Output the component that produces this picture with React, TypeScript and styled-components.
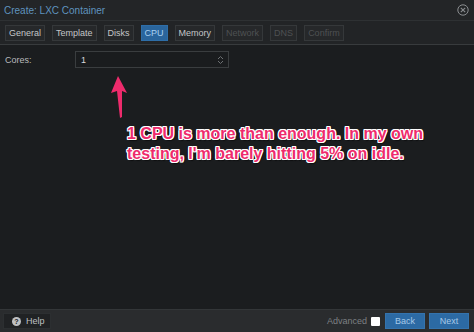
import React from "react";
import styled, { createGlobalStyle } from "styled-components";

const Global = createGlobalStyle`
  html, body { margin: 0; padding: 0; background: #1c1e20; }
  body { font-family: "Liberation Sans", Arial, sans-serif; }
  #root { width: 474px; height: 332px; }
`;

const Window = styled.div`
  position: relative;
  width: 474px;
  height: 332px;
  display: flex;
  flex-direction: column;
  background: #1c1e20;
  overflow: hidden;
`;

const TitleBar = styled.div`
  height: 20px;
  display: flex;
  align-items: center;
  justify-content: space-between;
  padding: 0 5px 0 4px;
  background: #232527;
  border-bottom: 1px solid #2e3133;
`;

const Title = styled.div`
  color: #5f93bf;
  font-size: 10px;
`;

const TabBar = styled.div`
  height: 23px;
  display: flex;
  align-items: center;
  gap: 7px;
  padding: 0 5px;
  background: #222426;
  border-bottom: 1px solid #383b3d;
`;

const Tab = styled.div<{ $active?: boolean; $disabled?: boolean }>`
  height: 14px;
  padding: 0 3px;
  display: flex;
  align-items: center;
  font-size: 9px;
  border: 1px solid ${(p) => (p.$active ? "#2e6ea8" : "#35383a")};
  background: ${(p) => (p.$active ? "#2a659c" : "#26282a")};
  color: ${(p) => (p.$active ? "#a9d0f2" : p.$disabled ? "#4e5153" : "#c4c6c8")};
`;

const Body = styled.div`
  flex: 1;
  padding: 6px 5px;
  background: #1b1d1f;
`;

const Row = styled.div`
  display: flex;
  align-items: center;
`;

const Label = styled.div`
  width: 70px;
  color: #b8babc;
  font-size: 9px;
`;

const Input = styled.div`
  width: 154px;
  height: 17px;
  display: flex;
  align-items: center;
  justify-content: space-between;
  padding: 0 4px 0 5px;
  box-sizing: border-box;
  border: 1px solid #3a3d3f;
  background: #1a1c1e;
  color: #d8dadc;
  font-size: 9px;
`;

const Footer = styled.div`
  height: 22px;
  display: flex;
  align-items: center;
  padding: 0 5px 0 3px;
  background: #2a2c2e;
  border-top: 1px solid #333638;
`;

const HelpButton = styled.div`
  width: 48px;
  height: 16px;
  box-sizing: border-box;
  display: flex;
  align-items: center;
  gap: 5px;
  padding-left: 8px;
  background: #202224;
  border: 1px solid #2c2f31;
  color: #bfc1c3;
  font-size: 9px;
`;

const Spacer = styled.div`
  flex: 1;
`;

const Advanced = styled.div`
  display: flex;
  align-items: center;
  gap: 4px;
  color: #7d8083;
  font-size: 9px;
  margin-right: 5px;
`;

const Check = styled.div`
  width: 9px;
  height: 9px;
  background: #ffffff;
  border-radius: 1px;
`;

const BlueButton = styled.div`
  width: 40px;
  height: 16px;
  box-sizing: border-box;
  display: flex;
  align-items: center;
  justify-content: center;
  background: #2c6aa4;
  border: 1px solid #3473ad;
  color: #a7c9e8;
  font-size: 9px;
  & + & {
    margin-left: 4px;
  }
`;

const Arrow = styled.svg`
  position: absolute;
  left: 108px;
  top: 75px;
`;

const Note = styled.div`
  position: absolute;
  left: 127px;
  top: 124px;
  font-family: "Liberation Sans", Arial, sans-serif;
  font-weight: bold;
  font-size: 16px;
  line-height: 20px;
  letter-spacing: 0;
  color: #ee2b6c;
  text-shadow:
    1px 0 0 #fff, -1px 0 0 #fff, 0 1px 0 #fff, 0 -1px 0 #fff,
    1px 1px 0 #fff, -1px -1px 0 #fff, 1px -1px 0 #fff, -1px 1px 0 #fff,
    1.5px 1.5px 1px rgba(0,0,0,0.5);
  white-space: nowrap;
`;

export default function App() {
  return (
    <>
      <Global />
      <Window>
        <TitleBar>
          <Title>Create: LXC Container</Title>
          <svg width="12" height="12" viewBox="0 0 12 12">
            <circle cx="6" cy="6" r="5.2" fill="none" stroke="#8a8d90" strokeWidth="1" />
            <path d="M3.8 3.8 L8.2 8.2 M8.2 3.8 L3.8 8.2" stroke="#8a8d90" strokeWidth="1.1" />
          </svg>
        </TitleBar>
        <TabBar>
          <Tab>General</Tab>
          <Tab>Template</Tab>
          <Tab>Disks</Tab>
          <Tab $active>CPU</Tab>
          <Tab>Memory</Tab>
          <Tab $disabled>Network</Tab>
          <Tab $disabled>DNS</Tab>
          <Tab $disabled>Confirm</Tab>
        </TabBar>
        <Body>
          <Row>
            <Label>Cores:</Label>
            <Input>
              <span>1</span>
              <svg width="7" height="10" viewBox="0 0 7 10">
                <path d="M1 4 L3.5 1.5 L6 4 M1 6 L3.5 8.5 L6 6" fill="none" stroke="#6e7174" strokeWidth="1" />
              </svg>
            </Input>
          </Row>
        </Body>
        <Footer>
          <HelpButton>
            <svg width="9" height="9" viewBox="0 0 10 10">
              <circle cx="5" cy="5" r="5" fill="#bfc1c3" />
              <text x="5" y="8.2" textAnchor="middle" fontSize="8" fontWeight="bold" fill="#202224" fontFamily="Liberation Sans">?</text>
            </svg>
            Help
          </HelpButton>
          <Spacer />
          <Advanced>
            Advanced
            <Check />
          </Advanced>
          <BlueButton>Back</BlueButton>
          <BlueButton>Next</BlueButton>
        </Footer>
        <Arrow width="24" height="46" viewBox="0 0 24 46">
          <path d="M10 1 L3 18 L9 16 L12 43 L14 42 L14 16 L19 18 Z" fill="#ee2b6c" />
        </Arrow>
        <Note>
          1 CPU is more than enough. In my own
          <br />
          testing, I'm barely hitting 5% on idle.
        </Note>
      </Window>
    </>
  );
}
